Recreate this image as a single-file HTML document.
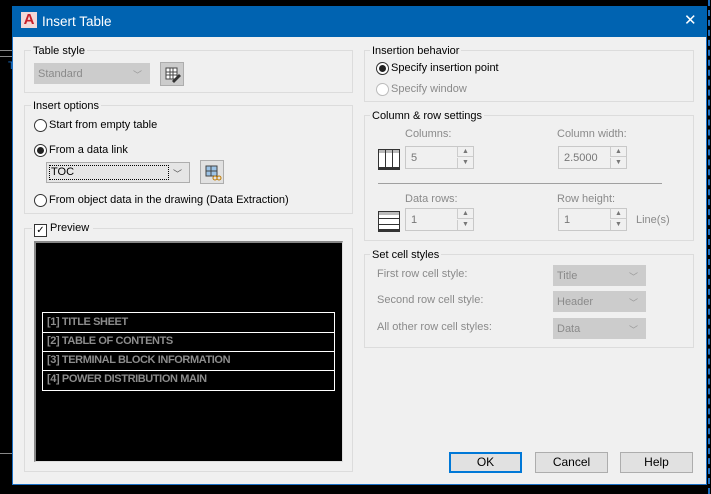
<!DOCTYPE html>
<html><head><meta charset="utf-8"><style>
*{margin:0;padding:0;box-sizing:border-box}
body{width:711px;height:494px;background:#000;position:relative;overflow:hidden;font-family:"Liberation Sans",sans-serif;font-size:11px;color:#000}
.a{position:absolute}
.dlg{left:12px;top:6px;width:695px;height:479px;background:#f0f0f0;border:1px solid #1a6fc4}
.title{left:12px;top:6px;width:695px;height:31px;background:#0063b1;color:#fff;font-size:13.5px}
.grp{border:1px solid #dcdcdc}
.lbl{background:#f0f0f0;padding:0 2px;white-space:nowrap}
.g{color:#8a8a8a}
.radio{width:13px;height:13px;border:1px solid #333;border-radius:50%;background:#fff}
.radio.on::after{content:"";position:absolute;left:2px;top:2px;width:7px;height:7px;border-radius:50%;background:#222}
.radio.dis{border-color:#bcbcbc}
.combo{background:#ccc;border:1px solid #ccc;color:#8a8a8a;padding:4px 0 0 3px}
.chev{position:absolute;right:7px;top:4px;color:#999;font-size:9px}
.spin{background:#f0f0f0;border:1px solid #c8c8c8;color:#777;padding:5px 0 0 5px}
.spin .up,.spin .dn{position:absolute;right:0;width:16px;height:10px;border-left:1px solid #ccc;font-size:7px;color:#777;text-align:center;line-height:10px}
.spin .up{top:0;border-bottom:1px solid #ccc}.spin .dn{bottom:0}
.btn{background:#e1e1e1;border:1px solid #adadad;text-align:center;line-height:18px;font-size:12px}
.row{position:absolute;left:42px;width:293px;border:1px solid #fff;color:#8c8c8c;font-family:"Liberation Sans",sans-serif;font-weight:bold;font-size:11px;padding-left:4px;letter-spacing:-.4px;line-height:17px}
</style></head><body>
<div class="a" style="left:0;top:50px;width:12px;height:1px;background:#888"></div>
<div class="a" style="left:0;top:56px;width:12px;height:1px;background:#888"></div>
<div class="a" style="left:8px;top:60px;color:#1a6fc4">T</div>
<div class="a" style="left:0;top:453px;width:12px;height:1px;background:#888"></div>
<div class="a" style="left:708px;top:0;width:2px;height:494px;border-left:2px dashed #1a6fc4"></div>
<div class="a dlg"></div>
<div class="a title"><div class="a" style="left:9px;top:6px;width:16px;height:16px;background:#f3d8d8;color:#c8202a;font-weight:bold;font-size:15px;text-align:center;line-height:16px">A</div><div class="a" style="left:30px;top:8px">Insert Table</div><div class="a" style="left:672px;top:5px;font-size:15px">✕</div></div>

<div class="a grp" style="left:24px;top:50px;width:329px;height:43px"></div>
<div class="a lbl" style="left:31px;top:45px">Table style</div>
<div class="a combo" style="left:34px;top:63px;width:116px;height:21px">Standard<span class="chev">﹀</span></div>
<div class="a btn" style="left:160px;top:62px;width:24px;height:24px;background:#ccc">
<svg width="22" height="22" style="position:absolute;left:1px;top:1px"><rect x="4" y="4" width="11" height="11" fill="#fff" stroke="#444"/><path d="M4 8h11M4 11h11M8 4v11M11 4v11" stroke="#444"/><path d="M10 17l7-7 2 2-7 7z" fill="#333"/></svg></div>

<div class="a grp" style="left:24px;top:105px;width:329px;height:109px"></div>
<div class="a lbl" style="left:31px;top:100px">Insert options</div>
<div class="a radio" style="left:34px;top:119px"></div><div class="a" style="left:49px;top:119px">Start from empty table</div>
<div class="a radio on" style="left:34px;top:144px"></div><div class="a" style="left:49px;top:144px">From a data link</div>
<div class="a" style="left:46px;top:162px;width:144px;height:21px;background:#e5e5e5;border:1px solid #adadad"><div class="a" style="left:2px;top:2px;width:120px;height:15px;border:1px dotted #000;padding-left:1px;line-height:13px">TOC</div><span class="chev" style="color:#555">﹀</span></div>
<div class="a btn" style="left:200px;top:160px;width:24px;height:24px"><svg width="22" height="22" style="position:absolute;left:1px;top:1px"><rect x="4" y="4" width="11" height="10" fill="#9cc3e6" stroke="#444"/><path d="M4 9h11M9 4v10" stroke="#444"/><circle cx="13" cy="16" r="2" fill="none" stroke="#c07a00"/><circle cx="17" cy="16" r="2" fill="none" stroke="#c07a00"/></svg></div>
<div class="a radio" style="left:34px;top:194px"></div><div class="a" style="left:49px;top:194px">From object data in the drawing (Data Extraction)</div>

<div class="a grp" style="left:24px;top:228px;width:329px;height:244px"></div>
<div class="a lbl" style="left:32px;top:222px;padding-left:2px;padding-right:4px"><span style="display:inline-block;width:13px;height:13px;border:1px solid #333;background:#fff;vertical-align:-2px;font-size:10px;line-height:11px;text-align:center">✓</span> Preview</div>
<div class="a" style="left:34px;top:241px;width:309px;height:221px;background:#000;border-left:2px solid #888;border-top:2px solid #888;border-right:1px solid #ddd;border-bottom:1px solid #ddd"></div>
<div class="row" style="top:312px;height:21px;padding-top:1px">[1] TITLE SHEET</div>
<div class="row" style="top:332px;height:20px">[2] TABLE OF CONTENTS</div>
<div class="row" style="top:351px;height:20px">[3] TERMINAL BLOCK INFORMATION</div>
<div class="row" style="top:370px;height:21px">[4] POWER DISTRIBUTION MAIN</div>

<div class="a grp" style="left:364px;top:50px;width:330px;height:52px"></div>
<div class="a lbl" style="left:370px;top:45px">Insertion behavior</div>
<div class="a radio on" style="left:376px;top:62px"></div><div class="a" style="left:391px;top:62px">Specify insertion point</div>
<div class="a radio dis" style="left:376px;top:83px"></div><div class="a g" style="left:391px;top:83px">Specify window</div>

<div class="a grp" style="left:364px;top:115px;width:330px;height:126px"></div>
<div class="a lbl" style="left:370px;top:110px">Column &amp; row settings</div>
<div class="a g" style="left:405px;top:128px">Columns:</div>
<div class="a g" style="left:557px;top:128px">Column width:</div>
<svg class="a" style="left:378px;top:149px" width="22" height="21"><rect x="0.5" y="0.5" width="21" height="20" fill="#fff" stroke="#333"/><rect x="1" y="1" width="20" height="3" fill="#bbb"/><path d="M7.5 1v19M14.5 1v19" stroke="#333"/><rect x="0" y="18" width="22" height="3" fill="#333"/></svg>
<div class="a spin" style="left:405px;top:146px;width:69px;height:23px">5<div class="up">▲</div><div class="dn">▼</div></div>
<div class="a spin" style="left:558px;top:146px;width:69px;height:23px">2.5000<div class="up">▲</div><div class="dn">▼</div></div>
<div class="a" style="left:378px;top:183px;width:284px;height:1px;background:#a0a0a0"></div>
<div class="a g" style="left:405px;top:193px">Data rows:</div>
<div class="a g" style="left:557px;top:193px">Row height:</div>
<svg class="a" style="left:378px;top:211px" width="22" height="21"><rect x="0.5" y="0.5" width="21" height="20" fill="#fff" stroke="#333"/><rect x="1" y="1" width="20" height="3" fill="#bbb"/><path d="M1 7.5h20M1 13.5h20" stroke="#333"/><rect x="0" y="18" width="22" height="3" fill="#333"/></svg>
<div class="a spin" style="left:405px;top:208px;width:69px;height:23px">1<div class="up">▲</div><div class="dn">▼</div></div>
<div class="a spin" style="left:558px;top:208px;width:69px;height:23px">1<div class="up">▲</div><div class="dn">▼</div></div>
<div class="a g" style="left:636px;top:214px">Line(s)</div>

<div class="a grp" style="left:364px;top:254px;width:330px;height:94px"></div>
<div class="a lbl" style="left:370px;top:249px">Set cell styles</div>
<div class="a g" style="left:377px;top:268px">First row cell style:</div>
<div class="a g" style="left:377px;top:294px">Second row cell style:</div>
<div class="a g" style="left:377px;top:321px">All other row cell styles:</div>
<div class="a combo" style="left:553px;top:265px;width:93px;height:21px">Title<span class="chev">﹀</span></div>
<div class="a combo" style="left:553px;top:291px;width:93px;height:21px">Header<span class="chev">﹀</span></div>
<div class="a combo" style="left:553px;top:318px;width:93px;height:21px">Data<span class="chev">﹀</span></div>

<div class="a btn" style="left:449px;top:452px;width:73px;height:21px;border:2px solid #0078d7;line-height:17px">OK</div>
<div class="a btn" style="left:535px;top:452px;width:73px;height:21px">Cancel</div>
<div class="a btn" style="left:620px;top:452px;width:73px;height:21px">Help</div>
</body></html>
